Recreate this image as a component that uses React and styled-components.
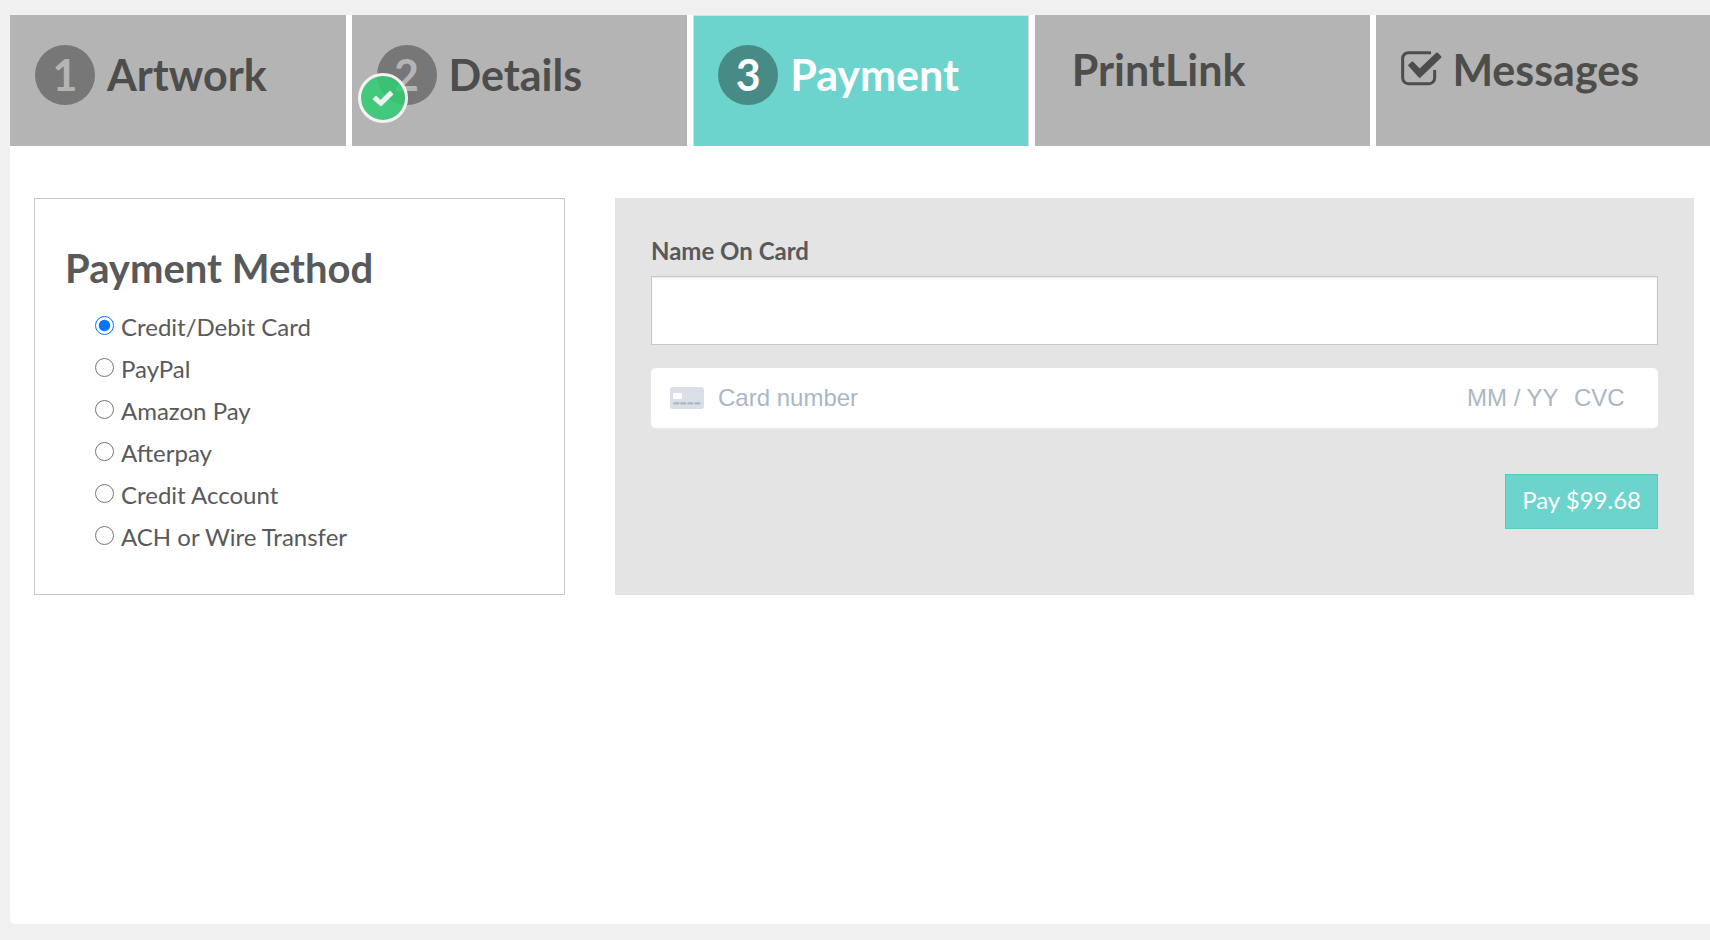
import React, { useState } from 'react';
import styled, { createGlobalStyle, css } from 'styled-components';

const GlobalStyle = createGlobalStyle`
  * {
    box-sizing: border-box;
  }
  body {
    margin: 0;
    background: #f0f0f0;
    color: #58595b;
    font-family: Lato, 'Open Sans', sans-serif;
    font-size: 24px;
    line-height: 32px;
    overflow-x: hidden;
  }
`;

const Page = styled.div`
  display: flex;
  min-height: 100vh;
  padding: 15px 0 16px 10px;
`;

const Panel = styled.main`
  flex: 1;
  min-width: 0;
  background: #fff;
  border-radius: 0 0 0 5px;
`;

const Tabs = styled.nav`
  display: grid;
  grid-template-columns: repeat(5, 1fr);
  gap: 6px;
  margin-right: -2px;
`;

const Tab = styled.a`
  display: flex;
  align-items: flex-start;
  gap: 12px;
  height: 131px;
  padding: 30px 25px;
  background: #b4b4b4;
  color: #4d4d4b;
  font-size: 43px;
  font-weight: 700;
  line-height: 60px;
  text-decoration: none;
  ${(props) =>
    props.$plain &&
    css`
      gap: 10px;
      padding-top: 25px;
    `}
  ${(props) =>
    props.$indent &&
    css`
      padding-left: 37px;
    `}
  ${(props) =>
    props.$active &&
    css`
      padding: 29px 24px;
      border: 1px solid #ddd;
      border-bottom: 0;
      background: #6cd4cc;
      color: #fff;
    `}
`;

const StepNumber = styled.span`
  position: relative;
  flex: none;
  width: 60px;
  height: 60px;
  border-radius: 50%;
  background: ${(props) => (props.$active ? '#488a85' : '#777')};
  color: ${(props) => (props.$active ? '#fff' : '#b4b4b4')};
  text-align: center;
`;

const DoneBadge = styled.span`
  position: absolute;
  top: 28px;
  left: -19px;
  width: 50px;
  height: 50px;
  border: 3px solid #f3f3f3;
  border-radius: 50%;
  background: rgba(50, 205, 115, 0.87);
  background-clip: padding-box;

  svg {
    display: block;
    width: 22px;
    height: 17px;
    margin: 14px 11px;
  }
`;

const CheckSquare = styled.svg`
  flex: none;
  width: 41px;
  height: 36px;
  margin-top: 10px;
`;

const Content = styled.div`
  display: grid;
  grid-template-columns: 531fr 1079fr;
  gap: 50px;
  padding: 52px 16px 52px 24px;
`;

const MethodBox = styled.form`
  padding: 41px 30px;
  border: 1px solid #c8c8c8;
`;

const Title = styled.h2`
  margin: 0 0 15px;
  font-size: 40px;
  font-weight: 700;
  line-height: 56px;
`;

const MethodList = styled.div`
  display: grid;
  gap: 10px;
  padding-left: 30px;
`;

const Method = styled.label`
  display: flex;
  align-items: flex-start;
  gap: 7px;
`;

const Radio = styled.input`
  width: 19px;
  height: 19px;
  margin: 5px 0 0;
`;

const CardForm = styled.form`
  display: flex;
  flex-direction: column;
  padding: 37px 36px 36px;
  background: #e4e4e4;
`;

const FieldLabel = styled.label`
  margin-bottom: 9px;
  font-weight: 700;
`;

const NameInput = styled.input`
  width: 100%;
  height: 69px;
  margin-bottom: 23px;
  padding: 0 16px;
  border: 1px solid #c8c8c8;
  border-radius: 0;
  box-shadow: inset 0 1px 2px rgba(0, 0, 0, 0.1);
  color: inherit;
  font: inherit;
`;

const CardRow = styled.div`
  display: flex;
  align-items: center;
  height: 60px;
  margin-bottom: 46px;
  padding: 0 33px 0 19px;
  border-radius: 5px;
  background: #fff;
  box-shadow: 0 1px 3px #e6ebf1;

  svg {
    flex: none;
    width: 34px;
    height: 22px;
    margin-right: 14px;
  }
`;

const CardInput = styled.input`
  width: ${(props) => props.$width || 'auto'};
  min-width: 0;
  flex: ${(props) => (props.$width ? 'none' : 1)};
  height: 32px;
  padding: 0;
  border: 0;
  background: transparent;
  color: #32325d;
  font-family: 'Liberation Sans', Arial, sans-serif;
  font-size: 24px;

  &::placeholder {
    color: #aab7c4;
    opacity: 1;
  }
`;

const PayButton = styled.button`
  align-self: flex-end;
  height: 55px;
  padding: 0 16px 3px;
  border: 1px solid #55cbc1;
  background: #6cd4cc;
  color: #fff;
  font: inherit;
  cursor: pointer;
`;

const METHODS = ['Credit/Debit Card', 'PayPal', 'Amazon Pay', 'Afterpay', 'Credit Account', 'ACH or Wire Transfer'];

const App = () => {
  const [method, setMethod] = useState(METHODS[0]);

  return (
    <>
      <GlobalStyle />
      <Page>
        <Panel>
          <Tabs>
            <Tab href="#artwork">
              <StepNumber>1</StepNumber>
              Artwork
            </Tab>
            <Tab href="#details">
              <StepNumber>
                2
                <DoneBadge>
                  <svg viewBox="0 0 66 51">
                    <path
                      d="M5 27 L12 20 L26 33 L54 5 L61 13 L27 46 Z"
                      fill="#f0f0f0"
                      stroke="#f0f0f0"
                      strokeWidth="5"
                      strokeLinejoin="round"
                    />
                  </svg>
                </DoneBadge>
              </StepNumber>
              Details
            </Tab>
            <Tab href="#payment" $active aria-current="step">
              <StepNumber $active>3</StepNumber>
              Payment
            </Tab>
            <Tab href="#printlink" $plain $indent>
              PrintLink
            </Tab>
            <Tab href="#messages" $plain>
              <CheckSquare viewBox="0 0 123 108">
                <path
                  d="M90 8 H22 A17 17 0 0 0 5 25 V84 A17 17 0 0 0 22 101 H84 A17 17 0 0 0 101 84 V60"
                  fill="none"
                  stroke="#4d4d4b"
                  strokeWidth="9"
                />
                <path
                  d="M25 46 L34 38 L56 60 L108 11 L118 21 L56 80 Z"
                  fill="#4d4d4b"
                  stroke="#4d4d4b"
                  strokeWidth="7"
                  strokeLinejoin="round"
                />
              </CheckSquare>
              Messages
            </Tab>
          </Tabs>

          <Content>
            <MethodBox>
              <Title>Payment Method</Title>
              <MethodList role="radiogroup" aria-label="Payment Method">
                {METHODS.map((name) => (
                  <Method key={name}>
                    <Radio type="radio" name="method" checked={method === name} onChange={() => setMethod(name)} />
                    {name}
                  </Method>
                ))}
              </MethodList>
            </MethodBox>

            <CardForm onSubmit={(e) => e.preventDefault()}>
              <FieldLabel htmlFor="cardName">Name On Card</FieldLabel>
              <NameInput id="cardName" type="text" />
              <CardRow>
                <svg viewBox="0 0 102 66">
                  <rect width="102" height="66" rx="8" fill="#dadfe7" />
                  <rect x="9" y="18" width="27" height="18" rx="4" fill="#fff" />
                  <path d="M13 49 H25 M34 49 H46 M55 49 H67 M76 49 H88" stroke="#aab7c4" strokeWidth="7" strokeLinecap="round" />
                </svg>
                <CardInput aria-label="Card number" placeholder="Card number" />
                <CardInput aria-label="Expiry date" placeholder="MM / YY" $width="107px" />
                <CardInput aria-label="CVC" placeholder="CVC" $width="51px" />
              </CardRow>
              <PayButton type="submit">Pay $99.68</PayButton>
            </CardForm>
          </Content>
        </Panel>
      </Page>
    </>
  );
};

export default App;
